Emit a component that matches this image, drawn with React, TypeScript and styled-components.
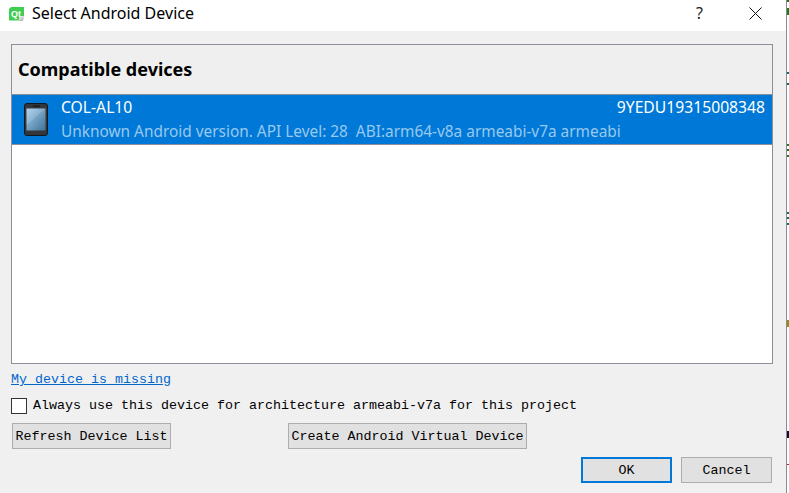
import React, { FC } from 'react'
import styled, { createGlobalStyle } from 'styled-components'

const uiFont = `'Noto Sans', 'Open Sans', sans-serif`
const monoFont = `'Liberation Mono', monospace`

const GlobalStyle = createGlobalStyle`
  html, body {
    margin: 0;
    padding: 0;
    background: #fff;
    overflow: hidden;
  }
`

const Screen = styled.div`
  width: 789px;
  height: 493px;
  display: flex;
  overflow: hidden;
`

const Dialog = styled.div`
  width: 786px;
  height: 493px;
  flex: none;
  display: flex;
  flex-direction: column;
  background: #f0f0f0;
  border-right: 1px solid #8a8a8a;
`

const TitleBar = styled.div`
  box-sizing: border-box;
  height: 31px;
  flex: none;
  display: flex;
  align-items: center;
  background: #fff;
  padding: 0 24px 5px 8px;
  font: 16px ${uiFont};
  color: #000;
`

const TitleText = styled.span`
  margin-left: 7px;
  flex: 1;
`

const HelpMark = styled.span`
  font-size: 16px;
  margin-right: 46px;
  color: #222;
`

const Content = styled.div`
  flex: 1;
  padding: 13px 13px 0 11px;
  display: flex;
  flex-direction: column;
`

const DevicePanel = styled.div`
  height: 318px;
  flex: none;
  border: 1px solid #8b8f98;
  background: #fff;
  display: flex;
  flex-direction: column;
`

const PanelHeader = styled.div`
  box-sizing: border-box;
  height: 50px;
  flex: none;
  display: flex;
  align-items: center;
  padding: 0 0 1px 6px;
  background: #efefef;
  border-bottom: 1px solid #8b8f98;
  font: 700 18px ${uiFont};
  color: #000;
`

const DeviceRow = styled.div`
  height: 49px;
  flex: none;
  display: flex;
  align-items: center;
  padding: 0 7px 0 12px;
  background: #0078d7;
  border-bottom: 1px solid #8b8f98;
`

const DeviceInfo = styled.div`
  flex: 1;
  margin-left: 13px;
  display: flex;
  flex-direction: column;
  gap: 5px;
  line-height: 20px;
  font-family: ${uiFont};
`

const InfoLine = styled.div<{ $muted?: boolean }>`
  display: flex;
  justify-content: space-between;
  height: 20px;
  font-size: ${({ $muted }) => ($muted ? '15.4px' : '15.7px')};
  color: ${({ $muted }) => ($muted ? '#99c9ef' : '#fff')};
  white-space: pre;
`

const MissingLink = styled.a`
  display: block;
  margin-top: 8px;
  font: 13.33px/16px ${monoFont};
  color: #0066cc;
  text-decoration: underline;
  width: fit-content;
`

const CheckRow = styled.label`
  display: flex;
  align-items: center;
  margin-top: 9px;
  height: 17px;
  font: 13.33px/16px ${monoFont};
  color: #000;
`

const CheckBox = styled.span`
  width: 14px;
  height: 14px;
  flex: none;
  background: #fff;
  border: 1px solid #333;
  margin-right: 6px;
`

const ToolRow = styled.div`
  display: flex;
  margin: 9px 0 0 1px;
  gap: 117px;
`

const ActionRow = styled.div`
  display: flex;
  justify-content: flex-end;
  gap: 9px;
  margin: 8px 1px 0 0;
`

const Button = styled.div<{ $width: number; $primary?: boolean }>`
  box-sizing: border-box;
  width: ${({ $width }) => $width}px;
  height: 26px;
  padding-top: 1px;
  display: flex;
  align-items: center;
  justify-content: center;
  background: #e1e1e1;
  border: ${({ $primary }) => ($primary ? '2px solid #0078d7' : '1px solid #adadad')};
  font: 13.33px/16px ${monoFont};
  color: #000;
`

const QtLogo: FC = () => (
  <svg width="17" height="17" viewBox="0 0 17 17">
    <path d="M3 2h13v9l-4.500 4.500H1V4z" fill="#41cd52" />
    <path d="M10.500 16l1-5H16.500z" fill="#dcdcdc" />
    <path d="M10.500 16l5.500-4-1 4z" fill="#bdbdbd" />
    <text x="3" y="11.500" fontFamily="'Liberation Sans', sans-serif" fontWeight="700" fontSize="9" fill="#fff">
      Qt
    </text>
  </svg>
)

const CloseIcon: FC = () => (
  <svg width="13" height="13" viewBox="0 0 13 13">
    <path d="M.5.5l12 12M12.500.5l-12 12" stroke="#111" strokeWidth="1" fill="none" />
  </svg>
)

const PhoneIcon: FC = () => (
  <svg width="24" height="33" viewBox="0 0 24 33">
    <defs>
      <linearGradient id="phoneScreen" x1="0" y1="0" x2="1" y2="1">
        <stop offset="0" stopColor="#a4cdec" />
        <stop offset="1" stopColor="#3f7197" />
      </linearGradient>
    </defs>
    <rect x="0.500" y="0.500" width="23" height="32" rx="2.500" fill="#33363a" stroke="#15181b" />
    <rect x="9" y="2.600" width="7" height="1" fill="#0c0c0c" />
    <path d="M2.500 5.500h19v22h-19z" fill="url(#phoneScreen)" />
    <path d="M2.500 5.500h19L2.500 22z" fill="#fff" opacity="0.14" />
  </svg>
)

// sliver of the editor that is visible behind the dialog
const BackdropSliver: FC = () => (
  <svg width="2" height="493" viewBox="0 0 2 493" style={{ flex: 'none', display: 'block' }}>
    <g fill="#0b6a6a">
      <rect y="72" width="2" height="2" />
      <rect y="83" width="2" height="2" />
      <rect y="212" width="2" height="2" />
      <rect y="217" width="2" height="2" />
      <rect y="223" width="2" height="2" />
    </g>
    <g fill="#1c7a1c">
      <rect y="0" width="2" height="2" />
      <rect y="8" width="2" height="7" />
      <rect y="144" width="2" height="2" />
      <rect y="149" width="2" height="2" />
      <rect y="155" width="2" height="2" />
    </g>
    <rect y="320" width="2" height="7" fill="#9a8a1e" />
    <rect y="431" width="2" height="7" fill="#101030" />
    <rect y="464" width="2" height="1" fill="#a03030" />
  </svg>
)

const App: FC = () => (
  <Screen>
    <GlobalStyle />
    <Dialog>
      <TitleBar>
        <QtLogo />
        <TitleText>Select Android Device</TitleText>
        <HelpMark>?</HelpMark>
        <CloseIcon />
      </TitleBar>
      <Content>
        <DevicePanel>
          <PanelHeader>Compatible devices</PanelHeader>
          <DeviceRow>
            <PhoneIcon />
            <DeviceInfo>
              <InfoLine>
                <span>COL-AL10</span>
                <span>9YEDU19315008348</span>
              </InfoLine>
              <InfoLine $muted>Unknown Android version. API Level: 28  ABI:arm64-v8a armeabi-v7a armeabi</InfoLine>
            </DeviceInfo>
          </DeviceRow>
        </DevicePanel>
        <MissingLink>My device is missing</MissingLink>
        <CheckRow>
          <CheckBox />
          Always use this device for architecture armeabi-v7a for this project
        </CheckRow>
        <ToolRow>
          <Button $width={159}>Refresh Device List</Button>
          <Button $width={239}>Create Android Virtual Device</Button>
        </ToolRow>
        <ActionRow>
          <Button $width={91} $primary>OK</Button>
          <Button $width={91}>Cancel</Button>
        </ActionRow>
      </Content>
    </Dialog>
    <BackdropSliver />
  </Screen>
)

export default App
